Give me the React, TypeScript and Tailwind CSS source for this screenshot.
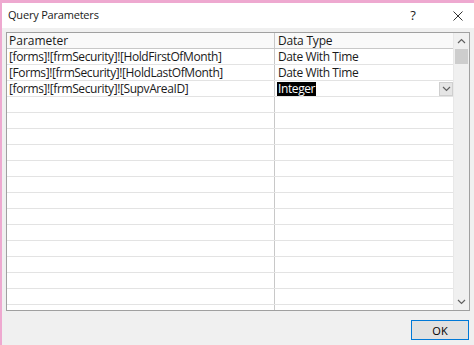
import React from 'react';

const font = { fontFamily: '"Segoe UI", "Open Sans", "Noto Sans", sans-serif' };

const rows: { param: string; type: string; active?: boolean }[] = [
  { param: '[forms]![frmSecurity]![HoldFirstOfMonth]', type: 'Date With Time' },
  { param: '[Forms]![frmSecurity]![HoldLastOfMonth]', type: 'Date With Time' },
  { param: '[forms]![frmSecurity]![SupvAreaID]', type: 'Integer', active: true },
];

const Chevron = ({ up }: { up?: boolean }) => (
  <svg width="9" height="6" viewBox="0 0 9 6" fill="none" stroke="#606060" strokeWidth="1.2">
    {up ? <path d="M1 5 L4.5 1.5 L8 5" /> : <path d="M1 1 L4.5 4.5 L8 1" />}
  </svg>
);

export default function App() {
  const blanks = Array.from({ length: 14 });

  return (
    <div className="w-[474px] h-[345px] bg-[#eea9d0] pl-[2px] pt-[3px] overflow-hidden" style={font}>
      <div className="w-full h-full bg-[#f0f0f0] flex flex-col">
        {/* Title bar */}
        <div className="h-[25px] bg-white flex items-center pl-[6px] text-[11px] tracking-[-0.2px] text-[#1a1a1a] shrink-0">
          <span className="flex-1">Query Parameters</span>
          <span className="w-[14px] text-center mr-[33px] text-[13px]">?</span>
          <svg width="10" height="10" viewBox="0 0 10 10" stroke="#333" strokeWidth="1" className="mr-[11px]">
            <path d="M0.5 0.5 L9.5 9.5 M9.5 0.5 L0.5 9.5" />
          </svg>
        </div>

        {/* Grid */}
        <div className="mt-[4px] ml-[4px] mr-[4px] h-[279px] border border-[#a0a0a0] bg-white flex overflow-hidden shrink-0">
          <div className="flex-1 flex flex-col text-[12px] text-[#1a1a1a]">
            <div className="h-[16px] flex border-b border-[#c8c8c8] bg-[#f9f9f9] shrink-0">
              <div className="w-[268px] pl-[2px] leading-[15px] border-r border-[#c8c8c8]">Parameter</div>
              <div className="flex-1 pl-[3px] leading-[15px] tracking-[-0.2px]">Data Type</div>
            </div>
            {rows.map((r) => (
              <div key={r.param} className="h-[16px] flex border-b border-[#e3e3e3] shrink-0 tracking-[-0.4px]">
                <div className="w-[268px] pl-[2px] leading-[15px] border-r border-[#c8c8c8] whitespace-nowrap overflow-hidden">
                  {r.param}
                </div>
                <div className="flex-1 flex items-center pl-[2px]">
                  {r.active ? (
                    <>
                      <span className="bg-black text-white leading-[14px] px-[1px] mr-auto">{r.type}</span>
                      <div className="w-[14px] h-[14px] bg-[#e5e5e5] border border-[#cfcfcf] flex items-center justify-center">
                        <Chevron />
                      </div>
                    </>
                  ) : (
                    <span className="leading-[15px] pl-[1px]">{r.type}</span>
                  )}
                </div>
              </div>
            ))}
            {blanks.map((_, i) => (
              <div key={i} className="h-[16px] flex border-b border-[#e3e3e3] shrink-0">
                <div className="w-[268px] border-r border-[#c8c8c8]" />
                <div className="flex-1" />
              </div>
            ))}
            <div className="flex-1 flex">
              <div className="w-[268px] border-r border-[#c8c8c8]" />
            </div>
          </div>

          {/* Scrollbar */}
          <div className="w-[16px] bg-[#f0f0f0] flex flex-col border-l border-[#e8e8e8]">
            <div className="h-[16px] flex items-center justify-center">
              <Chevron up />
            </div>
            <div className="h-[15px] bg-[#cdcdcd] mx-[1px]" />
            <div className="flex-1" />
            <div className="h-[16px] flex items-center justify-center">
              <Chevron />
            </div>
          </div>
        </div>

        {/* Footer */}
        <div className="flex-1 flex justify-end items-start pt-[9px] pr-[5px]">
          <button className="w-[58px] h-[20px] bg-[#e1e1e1] border border-[#0078d7] text-[11px] text-black leading-none">
            OK
          </button>
        </div>
      </div>
    </div>
  );
}
